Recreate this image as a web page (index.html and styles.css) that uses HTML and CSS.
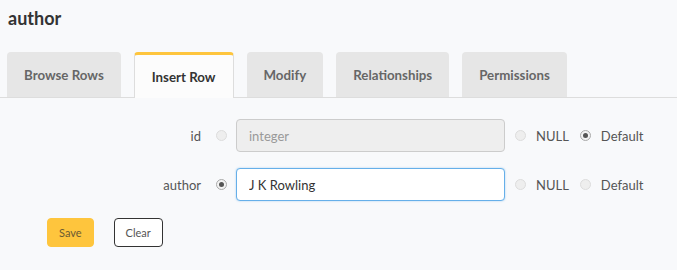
FILE: index.html
```html
<!DOCTYPE html>
<html lang="en">
<head>
    <meta charset="UTF-8">
    <title>author - Insert Row</title>
    <link rel="stylesheet" href="styles.css">
</head>
<body>
    <h2 class="table-title">author</h2>

    <!-- Tabs -->
    <ul class="tabs">
        <li class="tab">Browse Rows</li>
        <li class="tab active">Insert Row</li>
        <li class="tab">Modify</li>
        <li class="tab">Relationships</li>
        <li class="tab">Permissions</li>
    </ul>

    <!-- Insert form -->
    <form class="insert-form">
        <div class="field-row">
            <label class="field-label">id</label>
            <span class="radio disabled"></span>
            <input class="field-input" type="text" placeholder="integer" disabled>
            <span class="radio disabled"></span>
            <span class="option">NULL</span>
            <span class="radio checked"></span>
            <span class="option">Default</span>
        </div>
        <div class="field-row">
            <label class="field-label">author</label>
            <span class="radio checked"></span>
            <input class="field-input focus" type="text" value="J K Rowling">
            <span class="radio disabled"></span>
            <span class="option">NULL</span>
            <span class="radio disabled"></span>
            <span class="option">Default</span>
        </div>

        <div class="actions">
            <button type="button" class="btn btn-save">Save</button>
            <button type="button" class="btn btn-clear">Clear</button>
        </div>
    </form>
</body>
</html>
```

FILE: styles.css
```css
body {
    font-family: 'Lato', 'Open Sans', sans-serif;
    background-color: #f8f9fb;
    margin: 0;
    color: #333;
}

/* Titulo */
.table-title {
    font-size: 18px;
    font-weight: bold;
    margin: 0;
    padding: 6px 8px 0;
    height: 46px;
    line-height: 24px;
    color: #333;
}

/* Pestañas */
.tabs {
    list-style: none;
    display: flex;
    gap: 13px;
    margin: 0;
    padding: 0 7px;
    border-bottom: 1px solid #ddd;
}

.tab {
    height: 45px;
    line-height: 47px;
    padding: 0 17px;
    background: #e6e6e6;
    border-radius: 4px 4px 0 0;
    font-size: 13.3px;
    font-weight: bold;
    color: #666;
    box-sizing: border-box;
}

.tab.active {
    background: #fcfcfc;
    color: #333;
    border: 1px solid #ddd;
    border-top: 3px solid #fec53d;
    border-bottom: none;
    margin-bottom: -1px;
    height: 46px;
    line-height: 44px;
}

/* Formulario */
.insert-form {
    padding: 21px 0 0 47px;
}

.field-row {
    display: flex;
    align-items: center;
    height: 33px;
    margin-bottom: 16px;
}

.field-label {
    width: 154px;
    text-align: right;
    font-size: 13px;
    color: #555;
    margin-right: 15px;
}

.radio {
    width: 11px;
    height: 11px;
    border-radius: 50%;
    border: 1px solid #ddd;
    background: #eee;
    box-sizing: border-box;
    position: relative;
    flex-shrink: 0;
}

.radio.checked {
    background: #f3f3f3;
    border-color: #aaa;
}

.radio.checked::after {
    content: '';
    position: absolute;
    left: 2px;
    top: 2px;
    width: 5px;
    height: 5px;
    border-radius: 50%;
    background: #555;
}

.field-input {
    width: 269px;
    height: 33px;
    box-sizing: border-box;
    margin: 0 10px 0 9px;
    padding: 0 12px;
    border: 1px solid #ccc;
    border-radius: 4px;
    font-family: inherit;
    font-size: 13px;
    color: #333;
    background: #fff;
}

.field-input:disabled {
    background: #eee;
}

.field-input::placeholder {
    color: #999;
}

.field-input.focus {
    border-color: #66afe9;
    box-shadow: 0 0 2px rgba(102, 175, 233, 0.6);
}

.option {
    font-size: 13px;
    color: #555;
    margin: 0 11px 0 10px;
}

/* Botones */
.actions {
    display: flex;
    gap: 20px;
    padding-top: 1px;
}

.btn {
    height: 29px;
    padding: 0 11px;
    border-radius: 4px;
    font-family: inherit;
    font-size: 11px;
    cursor: pointer;
}

.btn-save {
    background: #fec53d;
    border: 1px solid #fec53d;
    color: #6b5a33;
}

.btn-clear {
    background: #fff;
    border: 1px solid #333;
    color: #555;
}
```
